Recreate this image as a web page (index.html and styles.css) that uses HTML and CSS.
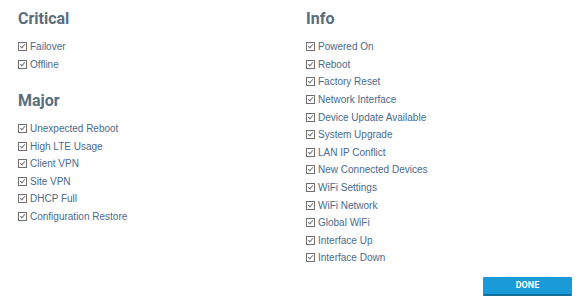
FILE: index.html
```html
<!DOCTYPE html>
<html>
<head>
<meta charset="utf-8">
<link rel="stylesheet" href="styles.css">
</head>
<body>
<div class="page">
  <div class="cols">
    <div class="col">
      <h2 class="head">Critical</h2>
      <ul class="list">
        <li class="item"><span class="cb"></span>Failover</li>
        <li class="item"><span class="cb"></span>Offline</li>
      </ul>
      <h2 class="head head-next">Major</h2>
      <ul class="list">
        <li class="item"><span class="cb"></span>Unexpected Reboot</li>
        <li class="item"><span class="cb"></span>High LTE Usage</li>
        <li class="item"><span class="cb"></span>Client VPN</li>
        <li class="item"><span class="cb"></span>Site VPN</li>
        <li class="item"><span class="cb"></span>DHCP Full</li>
        <li class="item"><span class="cb"></span>Configuration Restore</li>
      </ul>
    </div>
    <div class="col">
      <h2 class="head">Info</h2>
      <ul class="list">
        <li class="item"><span class="cb"></span>Powered On</li>
        <li class="item"><span class="cb"></span>Reboot</li>
        <li class="item"><span class="cb"></span>Factory Reset</li>
        <li class="item"><span class="cb"></span>Network Interface</li>
        <li class="item"><span class="cb"></span>Device Update Available</li>
        <li class="item"><span class="cb"></span>System Upgrade</li>
        <li class="item"><span class="cb"></span>LAN IP Conflict</li>
        <li class="item"><span class="cb"></span>New Connected Devices</li>
        <li class="item"><span class="cb"></span>WiFi Settings</li>
        <li class="item"><span class="cb"></span>WiFi Network</li>
        <li class="item"><span class="cb"></span>Global WiFi</li>
        <li class="item"><span class="cb"></span>Interface Up</li>
        <li class="item"><span class="cb"></span>Interface Down</li>
      </ul>
    </div>
  </div>
  <div class="actions">
    <button class="done">DONE</button>
  </div>
</div>
</body>
</html>
```
FILE: styles.css
```css
html, body {
  margin: 0;
  padding: 0;
  background: #ffffff;
}
.page {
  width: 588px;
  height: 305px;
  box-sizing: border-box;
  padding: 9px 16px 0 18px;
  font-family: "Liberation Sans", Arial, sans-serif;
}
.cols {
  display: grid;
  grid-template-columns: 288px 1fr;
}
.head {
  margin: 0 0 9px 0;
  font-family: Roboto, "Liberation Sans", sans-serif;
  font-weight: 700;
  font-size: 16px;
  line-height: 20px;
  color: #5a6d7b;
}
.head-next {
  margin-top: 17.6px;
}
.list {
  list-style: none;
  margin: 0;
  padding: 0;
}
.item {
  display: flex;
  align-items: center;
  height: 17.6px;
  font-size: 10px;
  color: #4a6a8c;
}
.cb {
  position: relative;
  width: 7px;
  height: 7px;
  border: 1px solid #707070;
  margin-right: 3px;
  flex: none;
}
.cb::after {
  content: "";
  position: absolute;
  left: 2px;
  top: 0px;
  width: 2px;
  height: 4px;
  border-right: 1px solid #777;
  border-bottom: 1px solid #777;
  transform: rotate(40deg);
}
.actions {
  display: flex;
  justify-content: flex-end;
  margin-top: 10px;
}
.done {
  width: 89px;
  height: 19px;
  border: 0;
  border-bottom: 2px solid #146f9c;
  border-radius: 1px;
  background: #1a9bd7;
  color: #fff;
  font-family: Roboto, "Liberation Sans", sans-serif;
  font-weight: 700;
  font-size: 9px;
  padding: 0;
}
```
